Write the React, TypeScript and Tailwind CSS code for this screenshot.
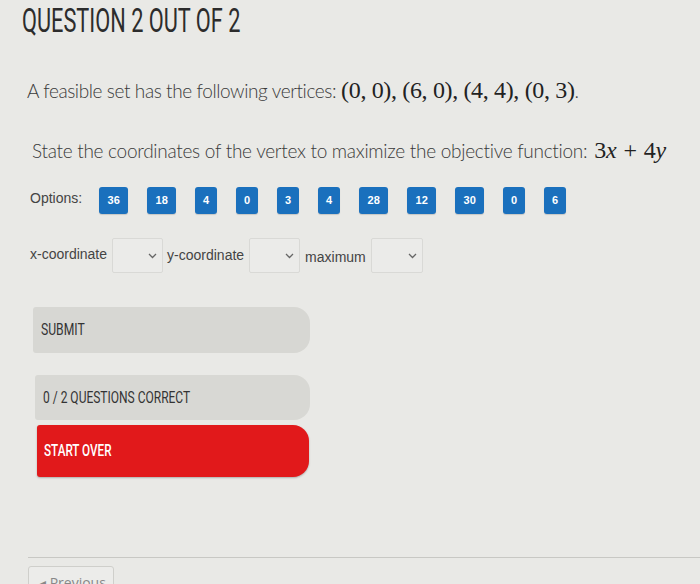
import React from "react";

const opts = ["36", "18", "4", "0", "3", "4", "28", "12", "30", "0", "6"];

function Chevron() {
  return (
    <svg width="9" height="6" viewBox="0 0 9 6" className="text-[#666]">
      <path d="M1 1l3.5 3.5L8 1" fill="none" stroke="currentColor" strokeWidth="1.3" />
    </svg>
  );
}

function SelectBox({ w }: { w: string }) {
  return (
    <div className={`${w} h-[35px] border border-[#d9d9d6] bg-[#ebebe9] rounded-[2px] flex items-center justify-end pr-[5px]`}>
      <Chevron />
    </div>
  );
}

const cond = "font-['Roboto',sans-serif]";
const body = "font-['Lato',sans-serif] font-light";
const math = "font-['Liberation_Serif',serif]";

export default function App() {
  return (
    <div className="w-[700px] h-[584px] overflow-hidden bg-[#e9e9e6] text-[#3a3a3a] relative">
      <div className="pl-[22px] pt-0 flex flex-col">
        <div className={`${cond} text-[34px] leading-[40px] text-[#2c2c2c] origin-left scale-x-[0.64] whitespace-nowrap`}>
          QUESTION 2 OUT OF 2
        </div>

        <div className={`${body} mt-[38px] pl-[5px] text-[19px] leading-[24px] tracking-[-0.4px] whitespace-nowrap flex items-baseline`}>
          <span>A feasible set has the following vertices:</span>
          <span className={`${math} text-[24px] text-[#222] ml-[5px] tracking-[-0.35px]`}>(0, 0), (6, 0), (4, 4), (0, 3)</span>
          <span>.</span>
        </div>

        <div className={`${body} mt-[35px] pl-[10px] text-[19px] leading-[24px] tracking-[-0.28px] whitespace-nowrap flex items-baseline`}>
          <span>State the coordinates of the vertex to maximize the objective function:</span>
          <span className={`${math} text-[24px] text-[#222] ml-[7px]`}>
            3<i>x</i>
            <span className="mx-[7px]">+</span>4<i>y</i>
          </span>
        </div>

        <div className="mt-[24px] pl-[8px] flex items-center">
          <span className="font-['Liberation_Sans',sans-serif] text-[14px] text-[#444] mr-[17px] -mt-[4px]">Options:</span>
          <div className="flex items-center gap-[19px]">
            {opts.map((o, i) => (
              <div
                key={i}
                className={`${o.length > 1 ? "w-[29px]" : "w-[22px]"} h-[27px] rounded-[3px] bg-[#1a70bd] text-white text-[11px] font-bold font-['Liberation_Sans',sans-serif] flex items-center justify-center shadow-[0_1px_1px_rgba(0,0,0,0.15)]`}
              >
                {o}
              </div>
            ))}
          </div>
        </div>

        <div className="mt-[24px] pl-[8px] flex items-center font-['Liberation_Sans',sans-serif] text-[14px] text-[#444]">
          <span className="mr-[5px] -mt-[2px]">x-coordinate</span>
          <SelectBox w="w-[51px]" />
          <span className="ml-[4px] mr-[5px]">y-coordinate</span>
          <SelectBox w="w-[51px]" />
          <span className="ml-[5px] mr-[5px] mt-[3px]">maximum</span>
          <SelectBox w="w-[52px]" />
        </div>

        <div className="mt-[34px] ml-[11px] w-[277px] h-[46px] bg-[#d7d7d3] rounded-l-[3px] rounded-r-[16px] flex items-center pl-[8px]">
          <span className={`${cond} text-[16px] text-[#333] origin-left scale-x-[0.76] whitespace-nowrap`}>SUBMIT</span>
        </div>

        <div className="mt-[22px] ml-[13px] w-[275px] h-[45px] bg-[#d8d8d4] rounded-l-[3px] rounded-r-[16px] flex items-center pl-[8px]">
          <span className={`${cond} text-[16px] text-[#333] origin-left scale-x-[0.75] whitespace-nowrap`}>0 / 2 QUESTIONS CORRECT</span>
        </div>

        <div className="mt-[5px] ml-[15px] w-[272px] h-[52px] bg-[#e1191b] rounded-l-[3px] rounded-r-[16px] flex items-center pl-[7px] shadow-[0_1px_2px_rgba(0,0,0,0.25)]">
          <span className={`${cond} text-[16px] font-medium text-white origin-left scale-x-[0.73] whitespace-nowrap`}>START OVER</span>
        </div>

        <div className="mt-[80px] ml-[6px] h-px bg-[#c8c8c4] w-[672px]" />

        <div className="mt-[8px] ml-[6px] w-[86px] h-[30px] shrink-0 border border-[#cfcfcb] bg-[#ececea] rounded-[3px] flex items-start pl-[10px] pt-[5px] font-['Open_Sans',sans-serif] text-[14px] text-[#888]">
          ◂ Previous
        </div>
      </div>
    </div>
  );
}
